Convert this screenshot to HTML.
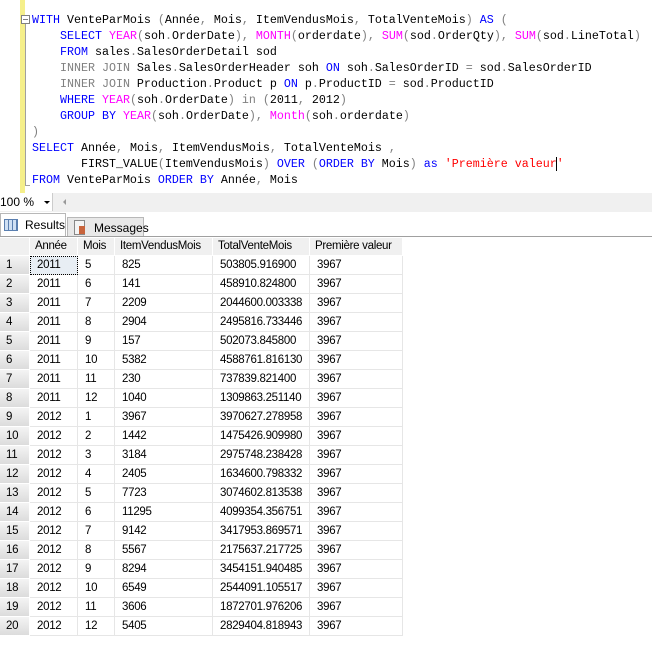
<!DOCTYPE html>
<html><head><meta charset="utf-8">
<style>
body{margin:0;width:652px;height:653px;background:#fff;position:relative;overflow:hidden;font-family:"Liberation Sans",sans-serif}
#ed{position:absolute;left:0;top:0;width:652px;height:193px;background:#fff}
#ybar{position:absolute;left:20px;top:0;width:5px;height:193px;background:#f5ef8a}
#code{position:absolute;left:32px;top:12px;font-family:"Liberation Mono",monospace;font-size:11.67px;line-height:16px;white-space:pre;color:#000}
.k{color:#0000ff}.f{color:#ff00ff}.g{color:#808080}.s{color:#ff0000}
#fold{position:absolute;left:21px;top:15px;width:7px;height:7px;border:1px solid #808080;background:#fff}
#fold:after{content:"";position:absolute;left:1px;top:3px;width:5px;height:1px;background:#808080}
#vl{position:absolute;left:25px;top:24px;width:1px;height:162px;background:#a0a0a0}
#vl2{position:absolute;left:25px;top:185px;width:5px;height:1px;background:#a0a0a0}
#zb{position:absolute;left:0;top:193px;width:652px;height:19px;background:#f0f0f0}
#zc{position:absolute;left:0;top:0;width:52px;height:18px;background:#fff;border-right:1px solid #ccc;font-size:12px;line-height:18px}
#grid{position:absolute;left:0;top:237px;font-size:11.5px;letter-spacing:-0.3px;color:#000}
.r{position:absolute;left:0;height:19px;width:403px}
.c{position:absolute;top:0;height:19px;line-height:19px;border-right:1px solid #e6e6e6;border-bottom:1px solid #e6e6e6;padding-left:7px;box-sizing:border-box}
.hd .c{background:#f0f0f0;height:17px;line-height:17px;border-right:1px solid #fff;border-bottom:none;padding-left:5px}
.rn{background:linear-gradient(#f4f4f4,#dcdcdc);border-right:1px solid #fff!important;border-bottom:1px solid #fff!important;padding-left:6px!important}
</style></head><body>
<div id="ed">
<div id="ybar"></div>
<div id="vl"></div><div id="vl2"></div>
<div id="fold"></div>
<div id="code"><span class="k">WITH</span> VenteParMois <span class="g">(</span>Année<span class="g">,</span> Mois<span class="g">,</span> ItemVendusMois<span class="g">,</span> TotalVenteMois<span class="g">)</span> <span class="k">AS</span> <span class="g">(</span>
    <span class="k">SELECT</span> <span class="f">YEAR</span><span class="g">(</span>soh<span class="g">.</span>OrderDate<span class="g">),</span> <span class="f">MONTH</span><span class="g">(</span>orderdate<span class="g">),</span> <span class="f">SUM</span><span class="g">(</span>sod<span class="g">.</span>OrderQty<span class="g">),</span> <span class="f">SUM</span><span class="g">(</span>sod<span class="g">.</span>LineTotal<span class="g">)</span>
    <span class="k">FROM</span> sales<span class="g">.</span>SalesOrderDetail sod
    <span class="g">INNER JOIN</span> Sales<span class="g">.</span>SalesOrderHeader soh <span class="k">ON</span> soh<span class="g">.</span>SalesOrderID <span class="g">=</span> sod<span class="g">.</span>SalesOrderID
    <span class="g">INNER JOIN</span> Production<span class="g">.</span>Product p <span class="k">ON</span> p<span class="g">.</span>ProductID <span class="g">=</span> sod<span class="g">.</span>ProductID
    <span class="k">WHERE</span> <span class="f">YEAR</span><span class="g">(</span>soh<span class="g">.</span>OrderDate<span class="g">)</span> <span class="g">in</span> <span class="g">(</span>2011<span class="g">,</span> 2012<span class="g">)</span>
    <span class="k">GROUP BY</span> <span class="f">YEAR</span><span class="g">(</span>soh<span class="g">.</span>OrderDate<span class="g">),</span> <span class="f">Month</span><span class="g">(</span>soh<span class="g">.</span>orderdate<span class="g">)</span>
<span class="g">)</span>
<span class="k">SELECT</span> Année<span class="g">,</span> Mois<span class="g">,</span> ItemVendusMois<span class="g">,</span> TotalVenteMois <span class="g">,</span>
       FIRST_VALUE<span class="g">(</span>ItemVendusMois<span class="g">)</span> <span class="k">OVER</span> <span class="g">(</span><span class="k">ORDER BY</span> Mois<span class="g">)</span> <span class="k">as</span> <span class="s">'Première valeur</span><span style="border-left:1px solid #000;margin-left:-1px"></span><span class="s">'</span>
<span class="k">FROM</span> VenteParMois <span class="k">ORDER BY</span> Année<span class="g">,</span> Mois</div>
</div>
<div id="zb"><div id="zc">100 %<span style="position:absolute;left:44px;top:8px;border:3px solid transparent;border-top:3px solid #000"></span></div>
<span style="position:absolute;left:60px;top:6px;border:3px solid transparent;border-right:3px solid #999"></span></div>
<div style="position:absolute;left:0;top:213px;width:66px;height:24px;background:#fff;border:1px solid #b8b8b8;border-bottom:none;box-sizing:border-box;font-size:12px;line-height:22px">
<span style="position:absolute;left:3px;top:5px;width:12px;height:10px;border:1px solid #5a7fb0;background:repeating-linear-gradient(90deg,#cfe0f4 0 3px,#5a7fb0 3px 4px)"></span>
<span style="position:absolute;left:24px">Results</span></div>
<div style="position:absolute;left:67px;top:217px;width:77px;height:20px;background:#e8e8e8;border:1px solid #b8b8b8;border-bottom:none;box-sizing:border-box;font-size:12px;line-height:20px">
<span style="position:absolute;left:6px;top:2px;width:9px;height:13px;border:1px solid #888;background:#f4f4f4"></span>
<span style="position:absolute;left:11px;top:8px;width:6px;height:8px;background:#c8643c"></span>
<span style="position:absolute;left:26px">Messages</span></div>
<div style="position:absolute;left:0;top:236px;width:652px;height:1px;background:#a0a0a0"></div>
<div id="grid"></div>
<script>
var d=[[2011,5,825,"503805.916900"],[2011,6,141,"458910.824800"],[2011,7,2209,"2044600.003338"],[2011,8,2904,"2495816.733446"],[2011,9,157,"502073.845800"],[2011,10,5382,"4588761.816130"],[2011,11,230,"737839.821400"],[2011,12,1040,"1309863.251140"],[2012,1,3967,"3970627.278958"],[2012,2,1442,"1475426.909980"],[2012,3,3184,"2975748.238428"],[2012,4,2405,"1634600.798332"],[2012,5,7723,"3074602.813538"],[2012,6,11295,"4099354.356751"],[2012,7,9142,"3417953.869571"],[2012,8,5567,"2175637.217725"],[2012,9,8294,"3454151.940485"],[2012,10,6549,"2544091.105517"],[2012,11,3606,"1872701.976206"],[2012,12,5405,"2829404.818943"]];
var X=[0,30,78,115,213,310,403];
function row(cells,top,hd,i){var h='<div class="r'+(hd?' hd':'')+'" style="top:'+top+'px">';
for(var j=0;j<6;j++){var cls='c'+(j==0&&!hd?' rn':'');var st='left:'+X[j]+'px;width:'+(X[j+1]-X[j])+'px;';
if(i===0&&j==1)st+='outline:1px dotted #000;outline-offset:-1px;background:#e8eef4;';
h+='<div class="'+cls+'" style="'+st+'">'+cells[j]+'</div>';}
return h+'</div>';}
var h=row(['','Année','Mois','ItemVendusMois','TotalVenteMois','Première valeur'],1,true);
for(var i=0;i<20;i++){var r=d[i];h+=row([i+1,r[0],r[1],r[2],r[3],3967],19+i*19,false,i);}
document.getElementById('grid').innerHTML=h;
</script>
</body></html>
